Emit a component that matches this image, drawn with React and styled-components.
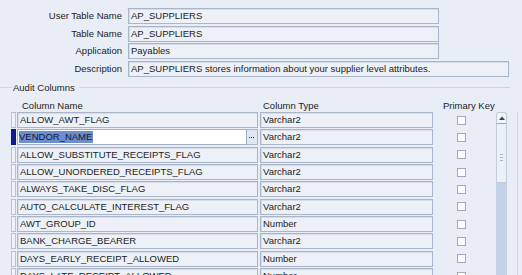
import React from "react";
import styled, { createGlobalStyle } from "styled-components";

const GlobalStyle = createGlobalStyle`
  html, body {
    margin: 0;
    padding: 0;
    background: #e9eef6;
    overflow: hidden;
  }
  body {
    font-family: "Liberation Sans", Arial, sans-serif;
    font-size: 9.5px;
    color: #1c1c1c;
  }
`;

const headerFields = [
  { label: "User Table Name", value: "AP_SUPPLIERS" },
  { label: "Table Name", value: "AP_SUPPLIERS" },
  { label: "Application", value: "Payables" },
  {
    label: "Description",
    value: "AP_SUPPLIERS stores information about your supplier level attributes.",
    wide: true,
  },
];

const columns = [
  { name: "ALLOW_AWT_FLAG", type: "Varchar2" },
  { name: "VENDOR_NAME", type: "Varchar2", selected: true },
  { name: "ALLOW_SUBSTITUTE_RECEIPTS_FLAG", type: "Varchar2" },
  { name: "ALLOW_UNORDERED_RECEIPTS_FLAG", type: "Varchar2" },
  { name: "ALWAYS_TAKE_DISC_FLAG", type: "Varchar2" },
  { name: "AUTO_CALCULATE_INTEREST_FLAG", type: "Varchar2" },
  { name: "AWT_GROUP_ID", type: "Number" },
  { name: "BANK_CHARGE_BEARER", type: "Varchar2" },
  { name: "DAYS_EARLY_RECEIPT_ALLOWED", type: "Number" },
  { name: "DAYS_LATE_RECEIPT_ALLOWED", type: "Number" },
];

const App = () => {
  return (
    <Page>
      <GlobalStyle />
      <Form>
        {headerFields.map((f) => (
          <React.Fragment key={f.label}>
            <Label>{f.label}</Label>
            <Field $width={f.wide ? 381 : 311}>{f.value}</Field>
          </React.Fragment>
        ))}
      </Form>

      <Legend>
        <LegendLine $width={12} />
        <LegendText>Audit Columns</LegendText>
        <LegendLine />
      </Legend>

      <HeaderRow>
        <HeadName>Column Name</HeadName>
        <HeadType>Column Type</HeadType>
        <HeadKey>Primary Key</HeadKey>
      </HeaderRow>

      <Body>
        <Rows>
          {columns.map((c) => (
            <Row key={c.name}>
              <Indicator $active={c.selected} />
              {c.selected ? (
                <NameCell>
                  <EditField>
                    <Selection>{c.name}</Selection>
                  </EditField>
                  <LovButton>
                    <Dots />
                  </LovButton>
                </NameCell>
              ) : (
                <NameField>{c.name}</NameField>
              )}
              <TypeField>{c.type}</TypeField>
              <CheckCell>
                <Checkbox />
              </CheckCell>
            </Row>
          ))}
        </Rows>
        <Scrollbar>
          <ScrollButton>
            <svg width="6" height="4" viewBox="0 0 6 4">
              <path d="M0 4 L3 0.5 L6 4 Z" fill="#34435c" />
            </svg>
          </ScrollButton>
          <Thumb>
            <Grip>
              <span />
              <span />
              <span />
            </Grip>
          </Thumb>
          <Track />
        </Scrollbar>
      </Body>
    </Page>
  );
};

const Page = styled.div`
  padding-top: 8px;
  height: 275px;
  box-sizing: border-box;
  overflow: hidden;
`;

const Form = styled.div`
  display: grid;
  grid-template-columns: 122px auto;
  column-gap: 6px;
  row-gap: 1.7px;
  align-items: center;
`;

const Label = styled.div`
  text-align: right;
  line-height: 16px;
`;

const fieldBase = `
  box-sizing: border-box;
  height: 16px;
  line-height: 14px;
  padding: 0 2px;
  border: 1px solid #a9b5c8;
  background: #edf1f7;
  box-shadow: inset 1px 1px 0 #d6dde8;
  white-space: nowrap;
  overflow: hidden;
`;

const Field = styled.div`
  ${fieldBase}
  width: ${(p) => p.$width}px;
`;

const Legend = styled.div`
  display: flex;
  align-items: center;
  margin-top: 5px;
  width: 510px;
  height: 11px;
`;

const LegendLine = styled.div`
  height: 1px;
  background: #cfd6e1;
  ${(p) => (p.$width ? `width: ${p.$width}px;` : "flex: 1;")}
`;

const LegendText = styled.div`
  padding: 0 4px 0 1px;
`;

const HeaderRow = styled.div`
  display: flex;
  margin-top: 7px;
  height: 11px;
  line-height: 11px;
`;

const HeadName = styled.div`
  margin-left: 22px;
  width: 241px;
`;

const HeadType = styled.div`
  width: 180px;
`;

const HeadKey = styled.div``;

const Body = styled.div`
  display: flex;
  margin-top: 1px;
  width: 518px;
  box-sizing: border-box;
  border-right: 1px solid #d3d9e3;
`;

const Rows = styled.div`
  display: flex;
  flex-direction: column;
  gap: 1.33px;
  margin-left: 11px;
`;

const Row = styled.div`
  display: flex;
  align-items: center;
  height: 16px;
`;

const Indicator = styled.div`
  box-sizing: border-box;
  width: 5px;
  height: 16px;
  border: 1px solid ${(p) => (p.$active ? "#0a1a85" : "#b7c1d0")};
  background: ${(p) => (p.$active ? "#0d1f92" : "#eef1f7")};
  margin-right: 1px;
`;

const NameField = styled.div`
  ${fieldBase}
  width: 241px;
`;

const NameCell = styled.div`
  display: flex;
  width: 241px;
  height: 16px;
`;

const EditField = styled.div`
  ${fieldBase}
  flex: 1;
  background: #ffffff;
  box-shadow: none;
  border-color: #a3afc2;
  padding: 1px 1px;
  line-height: 12px;
`;

const Selection = styled.span`
  display: inline-block;
  background: #6d8dcc;
  color: #0c1838;
  line-height: 12px;
  padding-right: 1px;
`;

const LovButton = styled.div`
  box-sizing: border-box;
  width: 11px;
  height: 16px;
  border: 1px solid #a9b5c8;
  border-left: none;
  background: #dfe7f3;
  display: flex;
  align-items: center;
  justify-content: center;
`;

const Dots = styled.div`
  width: 6px;
  height: 1px;
  background: repeating-linear-gradient(
    to right,
    #2c3a55 0 1px,
    transparent 1px 2px
  );
`;

const TypeField = styled.div`
  ${fieldBase}
  width: 173px;
  margin-left: 2px;
`;

const CheckCell = styled.div`
  width: 56px;
  display: flex;
  justify-content: center;
`;

const Checkbox = styled.div`
  box-sizing: border-box;
  width: 9px;
  height: 9px;
  border: 1px solid #a3abb8;
  background: #fbfcfe;
`;

const Scrollbar = styled.div`
  margin-left: 7px;
  width: 11px;
  display: flex;
  flex-direction: column;
`;

const ScrollButton = styled.div`
  box-sizing: border-box;
  height: 11px;
  border: 1px solid #c3ccd9;
  border-bottom: none;
  border-radius: 3px 3px 0 0;
  background: #f1f4f9;
  display: flex;
  align-items: center;
  justify-content: center;
`;

const Thumb = styled.div`
  box-sizing: border-box;
  height: 60px;
  border: 1px solid #c3ccd9;
  border-top: 1px solid #9aa7bb;
  background: #edf1f7;
  display: flex;
  align-items: center;
  justify-content: center;
`;

const Grip = styled.div`
  display: flex;
  flex-direction: column;
  gap: 2px;
  margin-top: 8px;
  span {
    display: block;
    width: 3px;
    height: 1px;
    background: #a7b2c2;
  }
`;

const Track = styled.div`
  height: 120px;
  background: #c3d2e7;
`;

export default App;
